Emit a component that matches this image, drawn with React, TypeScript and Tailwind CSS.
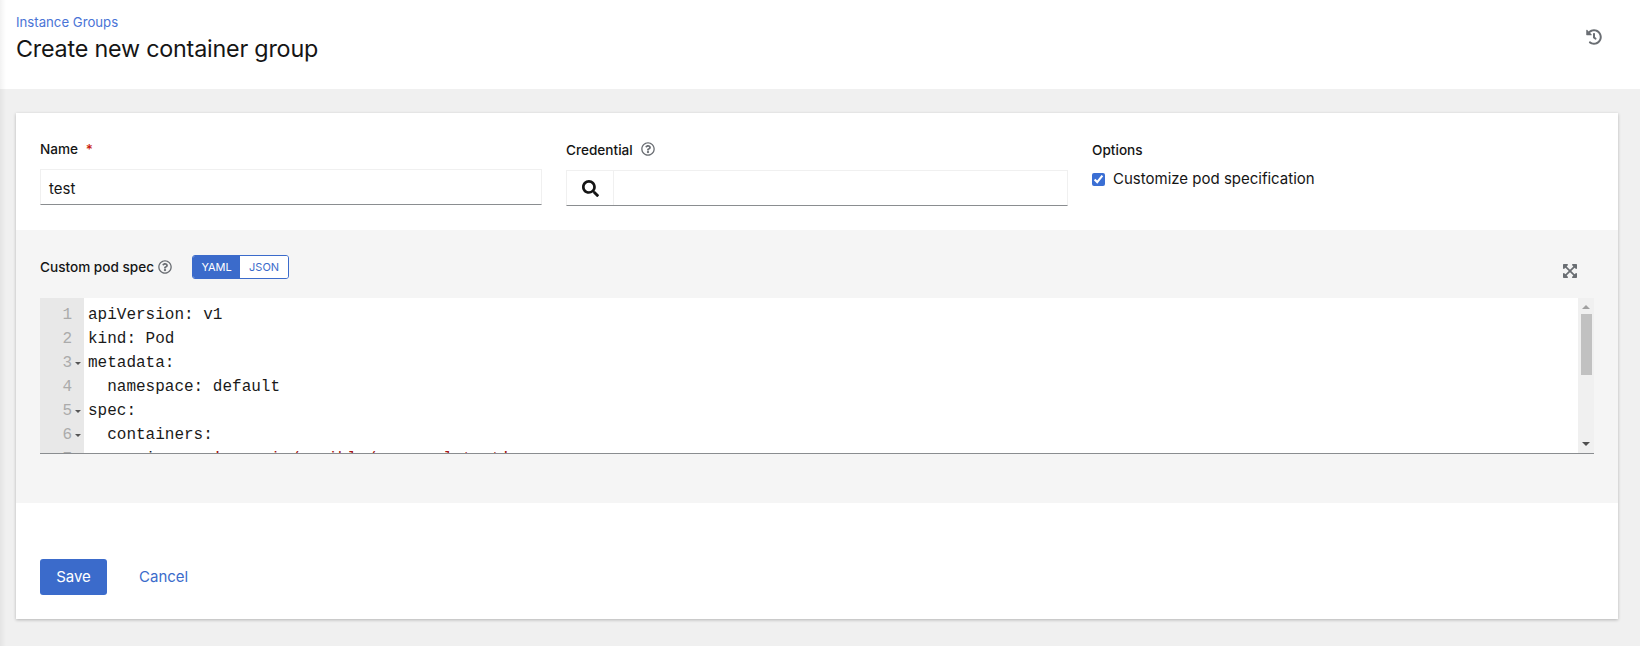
import { FaExpandArrowsAlt, FaHistory, FaRegQuestionCircle, FaSearch } from "react-icons/fa";

const sans = "font-['Inter','Liberation_Sans',sans-serif]";

const lines: { n: number; fold?: boolean; text: React.ReactNode }[] = [
  { n: 1, text: "apiVersion: v1" },
  { n: 2, text: "kind: Pod" },
  { n: 3, fold: true, text: "metadata:" },
  { n: 4, text: "  namespace: default" },
  { n: 5, fold: true, text: "spec:" },
  { n: 6, fold: true, text: "  containers:" },
  {
    n: 7,
    text: (
      <>
        {"    - image: "}
        <span className="text-[#a31515]">'quay.io/ansible/awx-ee:latest'</span>
      </>
    ),
  },
];

function HelpIcon() {
  return <FaRegQuestionCircle className="size-[14px] text-[#6a6e73]" />;
}

function Editor() {
  return (
    <div className="flex h-[156px] overflow-hidden border-b border-[#8a8d90] bg-white">
      <div className="w-[44px] shrink-0 bg-[#e8e8e8] pt-[5px] font-['Liberation_Mono',monospace] text-base leading-6 text-[#ababab]">
        {lines.map(line => (
          <div key={line.n} className="relative h-6 pr-[12px] text-right">
            {line.n}
            {line.fold && (
              <span className="absolute top-[11px] right-[3px] border-x-[3px] border-t-[3px] border-x-transparent border-t-[#555]" />
            )}
          </div>
        ))}
      </div>
      <pre className="flex-1 pt-[5px] pl-1 font-['Liberation_Mono',monospace] text-base leading-6 text-[#1a1a1a]">
        {lines.map(line => (
          <div key={line.n} className="h-6">
            {line.text}
          </div>
        ))}
      </pre>
      <div className="flex w-4 shrink-0 flex-col items-center bg-[#f0f0f0] pt-[7px]">
        <span className="border-x-[4px] border-b-[4px] border-x-transparent border-b-[#a0a0a0]" />
        <div className="mt-[5px] h-[61px] w-[11px] bg-[#c1c1c1]" />
        <span className="mt-auto mb-[7px] border-x-[4px] border-t-[4px] border-x-transparent border-t-[#505050]" />
      </div>
    </div>
  );
}

export default function App() {
  return (
    <div className={`relative h-[646px] w-[1640px] overflow-hidden bg-[#f0f0f0] ${sans}`}>
      <div className="absolute inset-y-0 left-0 w-1.5 bg-gradient-to-r from-black/5 to-transparent" />

      <header className="flex h-[89px] items-start justify-between bg-white pl-4 pr-[38px]">
        <div>
          <a className="mt-[14px] block text-[13.2px] leading-4 text-[#4a74d6]">Instance Groups</a>
          <h1 className="mt-[3px] text-[23.3px] leading-8 tracking-[-0.2px] text-[#151515]">Create new container group</h1>
        </div>
        <FaHistory className="mt-[29px] size-4 text-[#6a6e73]" />
      </header>

      <main className="mx-[22px] mt-6 ml-4 h-[506px] bg-white shadow-[0_1px_3px_rgba(0,0,0,0.25)]">
        <div className="grid h-[117px] grid-cols-[502px_502px_1fr] gap-x-6 px-6 pt-5">
          <div>
            <label className="block h-[36px] pt-[4px] text-[13.6px] leading-6 font-medium text-[#151515]">
              Name <span className="ml-1 text-[#c9190b]">*</span>
            </label>
            <div className="flex h-9 items-center border border-[#f0f0f0] border-b-[#8a8d90] px-2 pt-[5px] text-[15px] text-[#151515]">
              test
            </div>
          </div>
          <div>
            <label className="flex h-[37px] items-start gap-2 pt-[5px] text-[13.6px] leading-6 font-medium text-[#151515]">
              Credential
              <span className="mt-[4px]">
                <HelpIcon />
              </span>
            </label>
            <div className="flex h-9 border border-[#f0f0f0] border-b-[#8a8d90]">
              <div className="flex w-[47px] items-center justify-center border-r border-[#f0f0f0]">
                <FaSearch className="size-[17px] text-[#151515]" />
              </div>
              <div className="flex-1" />
            </div>
          </div>
          <div>
            <div className="h-[34px] pt-[5px] text-[13.6px] leading-6 font-medium text-[#151515]">Options</div>
            <label className="flex items-center gap-2 text-[15px] leading-6 text-[#151515]">
              <input type="checkbox" defaultChecked className="size-[13px] accent-[#3b6fd4]" />
              Customize pod specification
            </label>
          </div>
        </div>

        <section className="h-[273px] bg-[#f5f5f5] px-6 pt-[25px]">
          <div className="flex h-6 items-center">
            <span className="text-[13.6px] leading-6 font-medium text-[#151515]">Custom pod spec</span>
            <span className="ml-[4px]">
              <HelpIcon />
            </span>
            <div className="ml-[20px] flex h-6 overflow-hidden rounded-[3px] border border-[#3b6bcb] text-[11px]">
              <span className="flex w-[47px] items-center justify-center bg-[#3b6bcb] text-white">YAML</span>
              <span className="flex w-[48px] items-center justify-center bg-white text-[#3b6bcb]">JSON</span>
            </div>
            <FaExpandArrowsAlt className="mt-[7px] mr-[16px] ml-auto size-4 text-[#6a6e73]" />
          </div>
          <div className="mt-[19px]">
            <Editor />
          </div>
        </section>

        <div className="flex items-center gap-[8px] px-6 pt-14">
          <button className="h-9 w-[67px] rounded-[3px] bg-[#3b6bcb] text-[15px] text-white">Save</button>
          <button className="h-9 px-6 text-[15px] text-[#3b6bcb]">Cancel</button>
        </div>
      </main>
    </div>
  );
}
